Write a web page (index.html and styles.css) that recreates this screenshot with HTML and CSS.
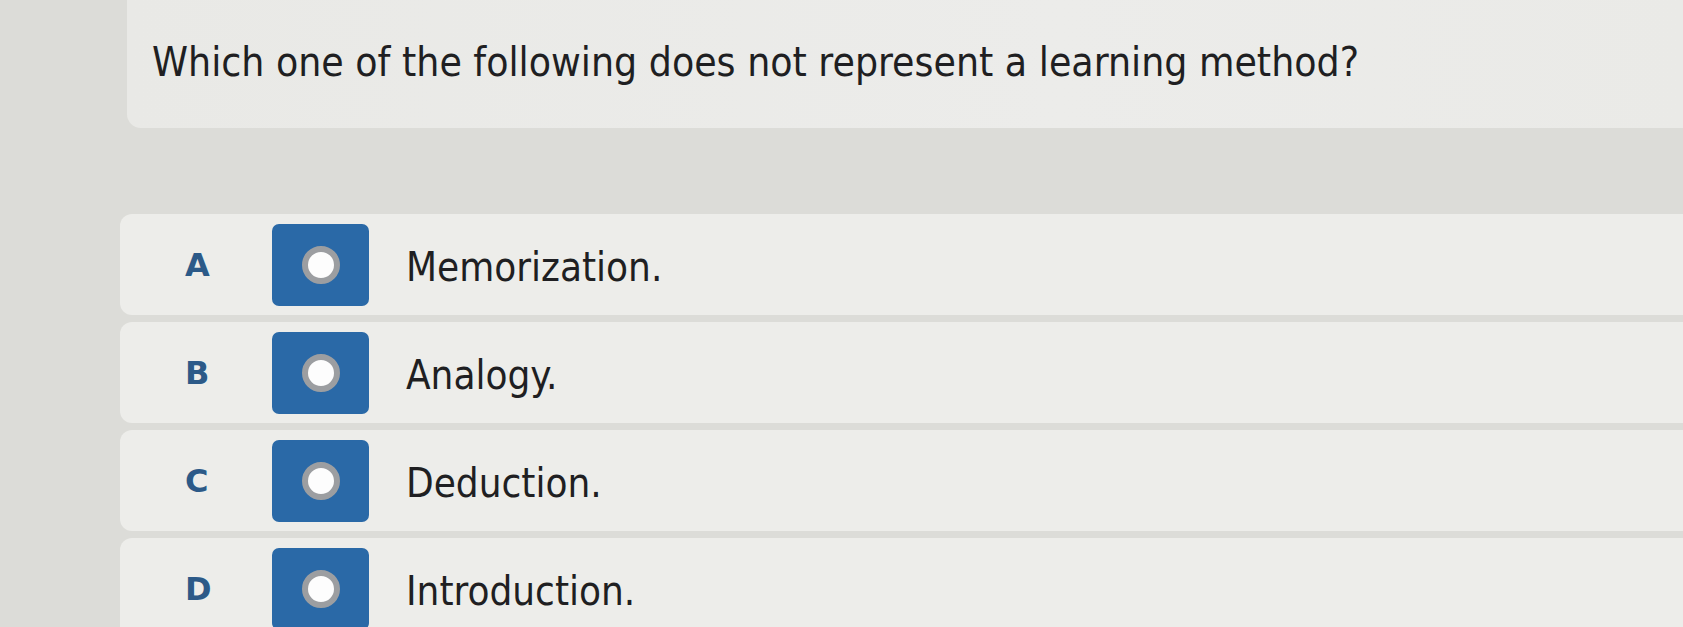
FILE: index.html
```html
<!DOCTYPE html>
<html lang="en">
<head>
<meta charset="utf-8">
<title>Question</title>
<link rel="stylesheet" href="styles.css">
</head>
<body>
<main class="page">
  <section class="question">
    <h1 class="question-text">Which one of the following does not represent a learning method?</h1>
  </section>
  <ul class="options">
    <li class="option">
      <span class="letter">A</span>
      <span class="radio"><span class="dot"></span></span>
      <span class="answer">Memorization.</span>
    </li>
    <li class="option">
      <span class="letter">B</span>
      <span class="radio"><span class="dot"></span></span>
      <span class="answer">Analogy.</span>
    </li>
    <li class="option">
      <span class="letter">C</span>
      <span class="radio"><span class="dot"></span></span>
      <span class="answer">Deduction.</span>
    </li>
    <li class="option">
      <span class="letter">D</span>
      <span class="radio"><span class="dot"></span></span>
      <span class="answer">Introduction.</span>
    </li>
  </ul>
</main>
</body>
</html>
```

FILE: styles.css
```css
html, body {
  margin: 0;
  padding: 0;
}
body {
  background: #dcdcd8;
  font-family: "DejaVu Sans Condensed", "DejaVu Sans", sans-serif;
  color: #1f1f22;
  height: 627px;
  overflow: hidden;
}
.page {
  display: flex;
  flex-direction: column;
}
.question {
  margin-left: 127px;
  height: 128px;
  background: linear-gradient(90deg, #e9e9e6 0%, #ececea 60%, #eaeae7 100%);
  border-radius: 0 0 0 14px;
  box-sizing: border-box;
  padding: 39px 0 0 25px;
}
.question-text {
  margin: 0;
  font-weight: normal;
  font-size: 40.5px;
  line-height: 46px;
  letter-spacing: 0;
}
.options {
  list-style: none;
  margin: 86px 0 0 120px;
  padding: 0;
  display: flex;
  flex-direction: column;
  gap: 7px;
}
.option {
  height: 101px;
  background: #ededea;
  border-radius: 12px 0 0 12px;
  display: flex;
  align-items: center;
}
.letter {
  width: 152px;
  box-sizing: border-box;
  padding-left: 65px;
  font-family: "DejaVu Sans", sans-serif;
  font-weight: bold;
  font-size: 32px;
  color: #2c5a88;
}
.radio {
  width: 97px;
  height: 82px;
  background: #2a69a7;
  border-radius: 7px;
  display: flex;
  align-items: center;
  justify-content: center;
}
.dot {
  width: 26px;
  height: 26px;
  border-radius: 50%;
  background: #fdfdfd;
  border: 6px solid #9c9ea1;
}
.answer {
  margin-left: 37px;
  padding-top: 4px;
  font-size: 40px;
}
```
